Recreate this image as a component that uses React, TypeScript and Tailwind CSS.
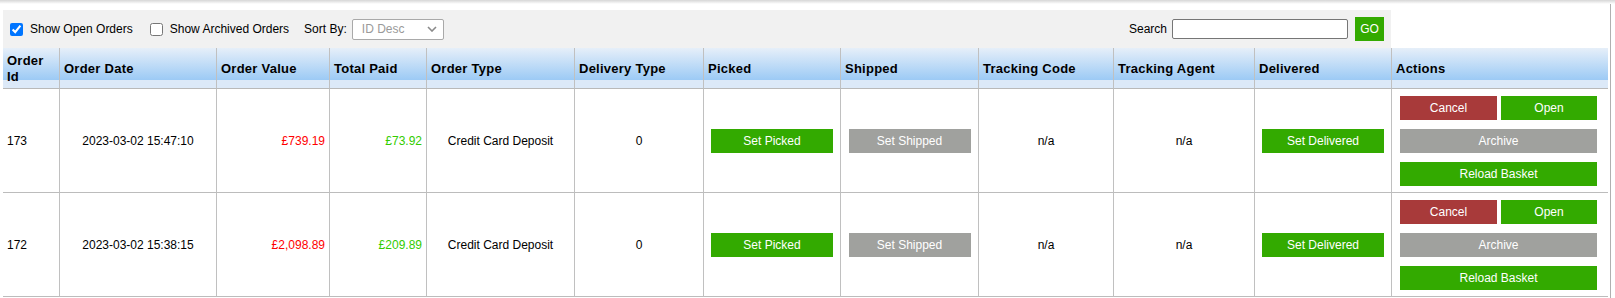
import type { ReactNode } from 'react';

type Order = {
  id: number;
  date: string;
  value: string;
  paid: string;
  type: string;
  delivery: string;
};

const ORDERS: Order[] = [
  { id: 173, date: '2023-03-02 15:47:10', value: '£739.19', paid: '£73.92', type: 'Credit Card Deposit', delivery: '0' },
  { id: 172, date: '2023-03-02 15:38:15', value: '£2,098.89', paid: '£209.89', type: 'Credit Card Deposit', delivery: '0' },
];

const HEADERS = [
  'Order Id',
  'Order Date',
  'Order Value',
  'Total Paid',
  'Order Type',
  'Delivery Type',
  'Picked',
  'Shipped',
  'Tracking Code',
  'Tracking Agent',
  'Delivered',
  'Actions',
];

const GRID =
  'grid grid-cols-[56px_157px_113px_97px_148px_129px_137px_138px_135px_141px_137px_217px]';

export default function App() {
  return (
    <div className="h-[298px] w-[1615px] overflow-hidden bg-white font-['Liberation_Sans',Arial,sans-serif] text-[12px] text-black">
      <div className="h-[4px] bg-gradient-to-b from-[#d6d6d6] to-white" />
      <div className="h-[294px] w-[1611px] border-r border-[#b0b0b0] pl-[3px] pt-[6px]">
        <Toolbar />
        <OrdersTable />
      </div>
    </div>
  );
}

// --- Filter bar --------------------------------------------------------------

function Toolbar() {
  return (
    <div className="flex h-[38px] w-[1388px] items-center bg-[#f1f1f1] pl-[7px] pr-[7px]">
      <input type="checkbox" defaultChecked className="m-0 h-[13px] w-[13px]" />
      <span className="ml-[7px]">Show Open Orders</span>
      <input type="checkbox" className="m-0 ml-[17px] h-[13px] w-[13px]" />
      <span className="ml-[7px]">Show Archived Orders</span>
      <span className="ml-[15px]">Sort By:</span>
      <div className="ml-[5px] flex h-[21px] w-[92px] items-center justify-between rounded-[2px] border border-[#a9a9a9] bg-white pl-[9px] pr-[6px] text-[#9a9a9a]">
        <span>ID Desc</span>
        <svg width="10" height="6" viewBox="0 0 10 6" fill="none">
          <path d="M1 1l4 4 4-4" stroke="#8a8a8a" strokeWidth="1.6" />
        </svg>
      </div>
      <span className="ml-auto">Search</span>
      <input
        type="text"
        className="ml-[5px] h-[20px] w-[176px] rounded-[2px] border border-[#767676] bg-white px-1 outline-none"
      />
      <button className="ml-[7px] h-[24px] w-[29px] bg-[#33aa00] text-white">GO</button>
    </div>
  );
}

// --- Orders grid -------------------------------------------------------------

function OrdersTable() {
  return (
    <div className="w-[1605px]">
      <div className={GRID}>
        {HEADERS.map((h, i) => (
          <div
            key={h}
            className={`flex h-[41px] items-center border-b border-[#b9b9b9] bg-[linear-gradient(to_bottom,#e6eff9_0px,#9ccaf5_32px,#dce9f8_32px)] px-[4px] pt-[2px] text-[13px] font-bold leading-[16px] tracking-[0.25px] ${
              i > 0 ? 'border-l border-l-[#c0c0c0]' : ''
            }`}
          >
            {h}
          </div>
        ))}
      </div>
      {ORDERS.map((o) => (
        <OrderRow key={o.id} order={o} />
      ))}
    </div>
  );
}

function Cell({ children, align = 'center', first }: { children?: ReactNode; align?: 'left' | 'center' | 'right'; first?: boolean }) {
  const justify = align === 'left' ? 'justify-start' : align === 'right' ? 'justify-end' : 'justify-center';
  return (
    <div
      className={`flex h-[104px] items-center border-b border-[#bcbcbc] px-[4px] pt-[1px] ${justify} ${
        first ? '' : 'border-l border-l-[#c0c0c0]'
      }`}
    >
      {children}
    </div>
  );
}

function Btn({ children, color, className = '' }: { children: ReactNode; color: 'green' | 'gray' | 'red'; className?: string }) {
  const bg = color === 'green' ? 'bg-[#33aa00]' : color === 'red' ? 'bg-[#a83a3a]' : 'bg-[#a0a19e]';
  return (
    <button className={`flex h-[24px] items-center justify-center text-[12px] text-white ${bg} ${className}`}>
      {children}
    </button>
  );
}

function OrderRow({ order }: { order: Order }) {
  return (
    <div className={GRID}>
      <Cell align="left" first>
        {order.id}
      </Cell>
      <Cell>{order.date}</Cell>
      <Cell align="right">
        <span className="text-[#ff0000]">{order.value}</span>
      </Cell>
      <Cell align="right">
        <span className="text-[#33cc00]">{order.paid}</span>
      </Cell>
      <Cell>{order.type}</Cell>
      <Cell>{order.delivery}</Cell>
      <Cell>
        <Btn color="green" className="w-[122px]">Set Picked</Btn>
      </Cell>
      <Cell>
        <Btn color="gray" className="w-[122px]">Set Shipped</Btn>
      </Cell>
      <Cell>n/a</Cell>
      <Cell>n/a</Cell>
      <Cell>
        <Btn color="green" className="w-[122px]">Set Delivered</Btn>
      </Cell>
      <div className="flex h-[104px] items-center border-b border-l border-[#bcbcbc] border-l-[#c0c0c0] pl-[8px] pt-[1px]">
        <div className="flex w-[197px] flex-col gap-[9px]">
          <div className="flex gap-[4px]">
            <Btn color="red" className="w-[97px]">Cancel</Btn>
            <Btn color="green" className="w-[96px]">Open</Btn>
          </div>
          <Btn color="gray" className="w-full">Archive</Btn>
          <Btn color="green" className="w-full">Reload Basket</Btn>
        </div>
      </div>
    </div>
  );
}
